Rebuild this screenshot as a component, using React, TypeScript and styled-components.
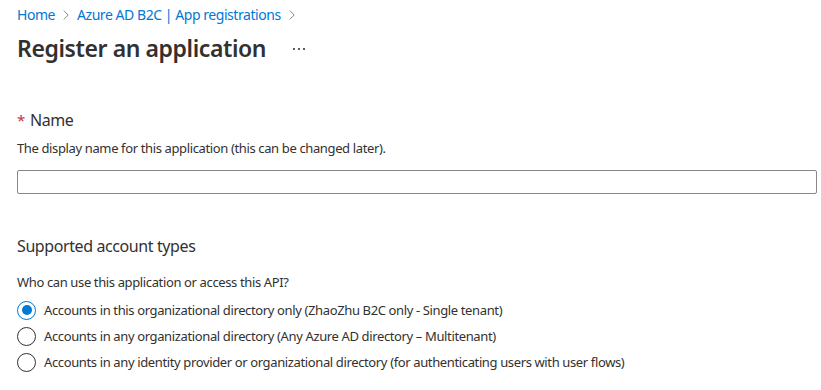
import React from "react";
import styled, { createGlobalStyle } from "styled-components";

const Global = createGlobalStyle`
  html, body { margin: 0; padding: 0; background: #ffffff; }
  body { font-family: "Segoe UI", "Noto Sans", "Open Sans", sans-serif; color: #323130; }
  * { box-sizing: border-box; }
`;

const Page = styled.div`
  width: 821px;
  height: 390px;
  padding: 5px 4px 0 17px;
  display: flex;
  flex-direction: column;
  overflow: hidden;
`;

const Breadcrumb = styled.nav`
  display: flex;
  align-items: center;
  gap: 8px;
  font-size: 14px;
  line-height: 19px;
  height: 19px;
  letter-spacing: -0.45px;
`;

const Crumb = styled.a`
  color: #0078d4;
  text-decoration: none;
`;

const Chevron = () => (
  <svg width="6" height="10" viewBox="0 0 6 10" aria-hidden="true">
    <path d="M0.8 0.6 L5.2 5 L0.8 9.4" fill="none" stroke="#8a8886" strokeWidth="1" />
  </svg>
);

const TitleRow = styled.div`
  display: flex;
  align-items: center;
  gap: 27px;
  margin-top: 9px;
  height: 30px;
`;

const Title = styled.h1`
  margin: 0;
  font-size: 23px;
  font-weight: 600;
  line-height: 30px;
  letter-spacing: -0.4px;
  color: #323130;
`;

const Dots = styled.span`
  display: inline-flex;
  gap: 3px;
  margin-top: 2px;
  & > i {
    width: 2px;
    height: 2px;
    background: #605e5c;
    display: block;
  }
`;

const Section = styled.section<{ $top: number }>`
  display: flex;
  flex-direction: column;
  margin-top: ${(p) => p.$top}px;
`;

const Heading = styled.h2`
  margin: 0;
  font-size: 16px;
  font-weight: 400;
  line-height: 22px;
  letter-spacing: -0.4px;
  color: #323130;
`;

const Required = styled.span`
  color: #c4314b;
  font-size: 15px;
  margin-right: 5px;
`;

const Help = styled.p<{ $top: number }>`
  margin: ${(p) => p.$top}px 0 0 0;
  font-size: 13px;
  line-height: 18px;
  letter-spacing: -0.37px;
  color: #323130;
`;

const TextInput = styled.input`
  margin-top: 13px;
  width: 800px;
  height: 24px;
  border: 1px solid #8a8886;
  border-radius: 2px;
  outline: none;
  background: #fff;
`;

const RadioList = styled.div`
  display: flex;
  flex-direction: column;
  gap: 8px;
  margin-top: 10px;
`;

const RadioRow = styled.label`
  display: flex;
  align-items: center;
  gap: 8px;
  height: 18px;
  font-size: 13px;
  line-height: 18px;
  letter-spacing: -0.37px;
  color: #323130;
`;

const Circle = styled.span<{ $checked: boolean }>`
  width: 19px;
  height: 19px;
  border-radius: 50%;
  border: 1px solid ${(p) => (p.$checked ? "#0078d4" : "#323130")};
  display: inline-flex;
  align-items: center;
  justify-content: center;
  flex: none;
  &::after {
    content: "";
    width: 10px;
    height: 10px;
    border-radius: 50%;
    background: ${(p) => (p.$checked ? "#0078d4" : "transparent")};
  }
`;

const options = [
  "Accounts in this organizational directory only (ZhaoZhu B2C only - Single tenant)",
  "Accounts in any organizational directory (Any Azure AD directory \u2013 Multitenant)",
  "Accounts in any identity provider or organizational directory (for authenticating users with user flows)",
];

export default function App() {
  return (
    <>
      <Global />
      <Page>
        <Breadcrumb>
          <Crumb>Home</Crumb>
          <Chevron />
          <Crumb>Azure AD B2C | App registrations</Crumb>
          <Chevron />
        </Breadcrumb>
        <TitleRow>
          <Title>Register an application</Title>
          <Dots>
            <i />
            <i />
            <i />
          </Dots>
        </TitleRow>
        <Section $top={46}>
          <Heading>
            <Required>*</Required>Name
          </Heading>
          <Help $top={8}>The display name for this application (this can be changed later).</Help>
          <TextInput aria-label="Name" />
        </Section>
        <Section $top={41}>
          <Heading>Supported account types</Heading>
          <Help $top={16}>Who can use this application or access this API?</Help>
          <RadioList>
            {options.map((o, i) => (
              <RadioRow key={o}>
                <Circle $checked={i === 0} />
                {o}
              </RadioRow>
            ))}
          </RadioList>
        </Section>
      </Page>
    </>
  );
}
